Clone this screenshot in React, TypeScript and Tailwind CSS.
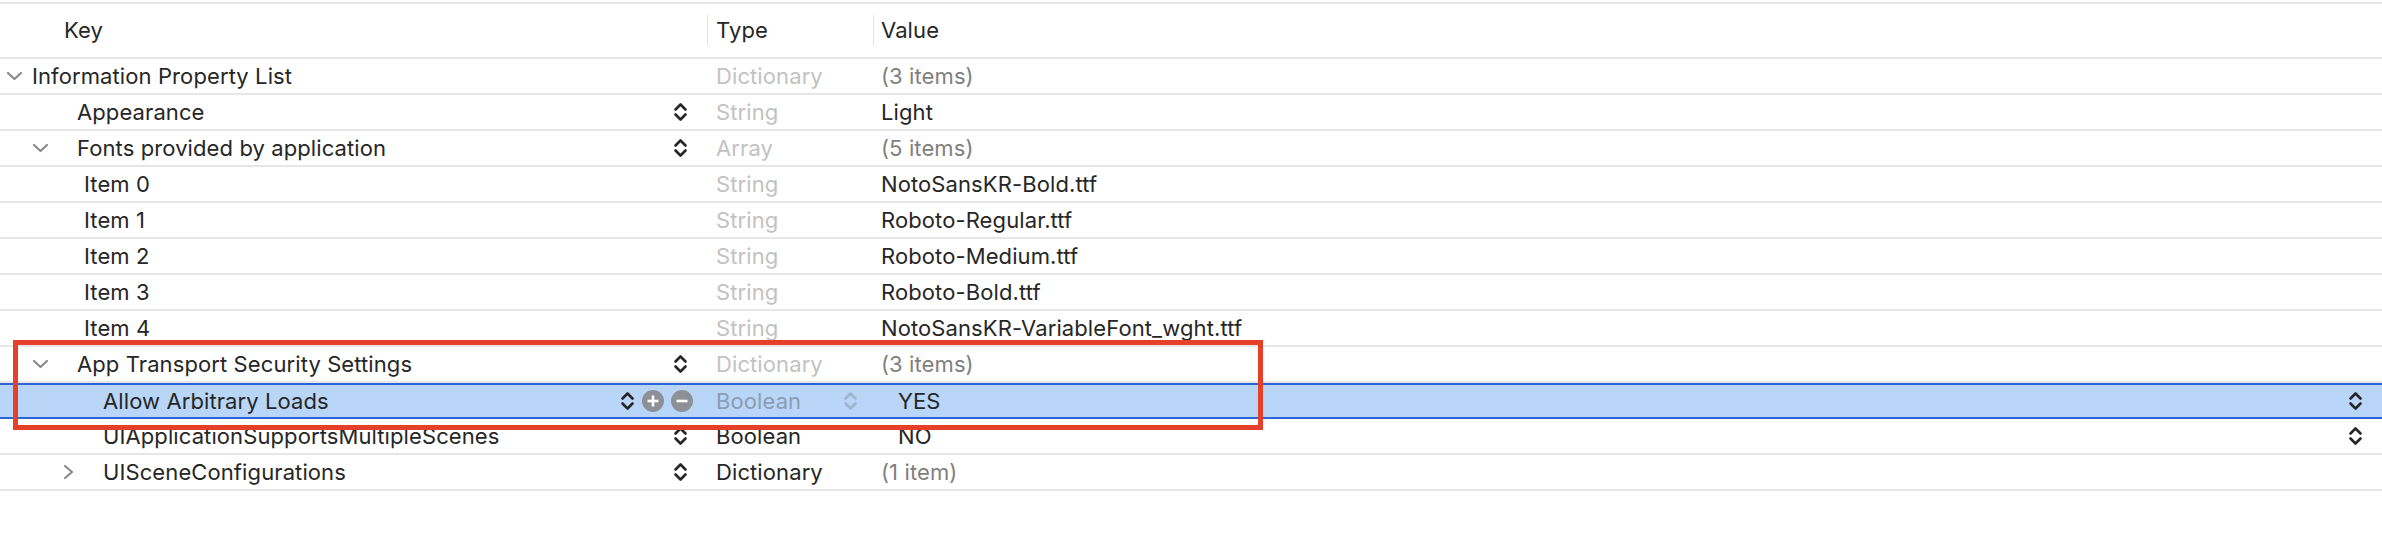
import React from 'react';

type Row = {
  key: string;
  lead: string; // width of the leading area before the key text
  chevron?: 'down' | 'right';
  chevronPad?: string;
  type: string;
  typeMuted?: boolean;
  value: string;
  valueMuted?: boolean;
  stepper?: boolean;
  selected?: boolean;
  boolValue?: boolean;
};

const rows: Row[] = [
  { key: 'Information Property List', lead: 'w-[32px]', chevron: 'down', chevronPad: 'pl-[6px]', type: 'Dictionary', typeMuted: true, value: '(3 items)', valueMuted: true },
  { key: 'Appearance', lead: 'w-[77px]', type: 'String', typeMuted: true, value: 'Light', stepper: true },
  { key: 'Fonts provided by application', lead: 'w-[77px]', chevron: 'down', chevronPad: 'pl-[32px]', type: 'Array', typeMuted: true, value: '(5 items)', valueMuted: true, stepper: true },
  { key: 'Item 0', lead: 'w-[84px]', type: 'String', typeMuted: true, value: 'NotoSansKR-Bold.ttf' },
  { key: 'Item 1', lead: 'w-[84px]', type: 'String', typeMuted: true, value: 'Roboto-Regular.ttf' },
  { key: 'Item 2', lead: 'w-[84px]', type: 'String', typeMuted: true, value: 'Roboto-Medium.ttf' },
  { key: 'Item 3', lead: 'w-[84px]', type: 'String', typeMuted: true, value: 'Roboto-Bold.ttf' },
  { key: 'Item 4', lead: 'w-[84px]', type: 'String', typeMuted: true, value: 'NotoSansKR-VariableFont_wght.ttf' },
  { key: 'App Transport Security Settings', lead: 'w-[77px]', chevron: 'down', chevronPad: 'pl-[32px]', type: 'Dictionary', typeMuted: true, value: '(3 items)', valueMuted: true, stepper: true },
  { key: 'Allow Arbitrary Loads', lead: 'w-[103px]', type: 'Boolean', value: 'YES', selected: true, boolValue: true },
  { key: 'UIApplicationSupportsMultipleScenes', lead: 'w-[103px]', type: 'Boolean', value: 'NO', stepper: true, boolValue: true },
  { key: 'UISceneConfigurations', lead: 'w-[103px]', chevron: 'right', chevronPad: 'pl-[63px]', type: 'Dictionary', value: '(1 item)', valueMuted: true, stepper: true },
];

function Stepper({ color = '#262626' }: { color?: string }) {
  return (
    <svg width="15" height="20" viewBox="0 0 15 20" fill="none" stroke={color} strokeWidth="2.6" strokeLinecap="round" strokeLinejoin="round">
      <path d="M2.5 7.5 L7.5 2.5 L12.5 7.5" />
      <path d="M2.5 12.5 L7.5 17.5 L12.5 12.5" />
    </svg>
  );
}

function Chevron({ dir }: { dir: 'down' | 'right' }) {
  if (dir === 'right') {
    return (
      <svg width="11" height="16" viewBox="0 0 11 16" fill="none" stroke="#8a8a8a" strokeWidth="2.2" strokeLinecap="round" strokeLinejoin="round">
        <path d="M2 2 L9 8 L2 14" />
      </svg>
    );
  }
  return (
    <svg width="17" height="10" viewBox="0 0 17 10" fill="none" stroke="#8a8a8a" strokeWidth="2.2" strokeLinecap="round" strokeLinejoin="round">
      <path d="M2 2 L8.5 8 L15 2" />
    </svg>
  );
}

function RoundButton({ kind }: { kind: 'plus' | 'minus' }) {
  return (
    <svg width="22" height="22" viewBox="0 0 22 22">
      <circle cx="11" cy="11" r="11" fill="#8d9096" />
      <path d="M5.5 11 H16.5" stroke="#fff" strokeWidth="2.6" />
      {kind === 'plus' && <path d="M11 5.5 V16.5" stroke="#fff" strokeWidth="2.6" />}
    </svg>
  );
}

function TableRow({ row }: { row: Row }) {
  const rowCls = row.selected
    ? 'h-[36px] bg-[#b9d6f9] border-y-2 border-[#2b63d8]'
    : 'h-[36px] border-b-2 border-[#e6e6e6]';
  const typeColor = row.selected ? 'text-[#8d9cb1]' : row.typeMuted ? 'text-[#c2c2c2]' : 'text-[#262626]';
  const valueColor = row.valueMuted ? 'text-[#7f7f7f]' : 'text-[#262626]';

  return (
    <div className={`flex items-center ${rowCls}`}>
      <div className="flex w-[707px] items-center">
        <div className={`flex shrink-0 items-center ${row.lead} ${row.chevronPad ?? ''}`}>
          {row.chevron && <Chevron dir={row.chevron} />}
        </div>
        <span className="flex-1 truncate">{row.key}</span>
        {row.selected ? (
          <div className="flex items-center gap-[7px] pr-[14px]">
            <Stepper />
            <RoundButton kind="plus" />
            <RoundButton kind="minus" />
          </div>
        ) : (
          row.stepper && (
            <div className="pr-[19px]">
              <Stepper />
            </div>
          )
        )}
      </div>
      <div className="flex w-[166px] items-center pl-[9px]">
        <span className={`w-[127px] ${typeColor}`}>{row.type}</span>
        {row.selected && <Stepper color="#9fb3cc" />}
      </div>
      <div className="flex flex-1 items-center">
        <span className={`flex-1 ${valueColor} ${row.boolValue ? 'pl-[25px]' : 'pl-[8px]'}`}>{row.value}</span>
        {row.boolValue && (
          <div className="pr-[19px]">
            <Stepper />
          </div>
        )}
      </div>
    </div>
  );
}

export default function App() {
  return (
    <div className="relative h-[540px] w-[2382px] overflow-hidden bg-white text-[22px] tracking-[0.1px] text-[#262626]" style={{ fontFamily: 'Inter, "Noto Sans", sans-serif' }}>
      <div className="mt-[2px] h-[2px] bg-[#e6e6e6]" />
      <div className="flex h-[55px] items-center border-b-2 border-[#e6e6e6]">
        <div className="w-[707px] pl-[64px]">Key</div>
        <div className="h-[31px] w-[1px] bg-[#e3e3e3]" />
        <div className="w-[165px] pl-[8px]">Type</div>
        <div className="h-[31px] w-[1px] bg-[#e3e3e3]" />
        <div className="flex-1 pl-[7px]">Value</div>
      </div>
      {rows.map((row) => (
        <TableRow key={row.key} row={row} />
      ))}

      {/* highlight box drawn over the rows */}
      <div className="pointer-events-none absolute left-[13px] top-[340px] h-[90px] w-[1250px] border-[5px] border-[#e5402a]" />
    </div>
  );
}
